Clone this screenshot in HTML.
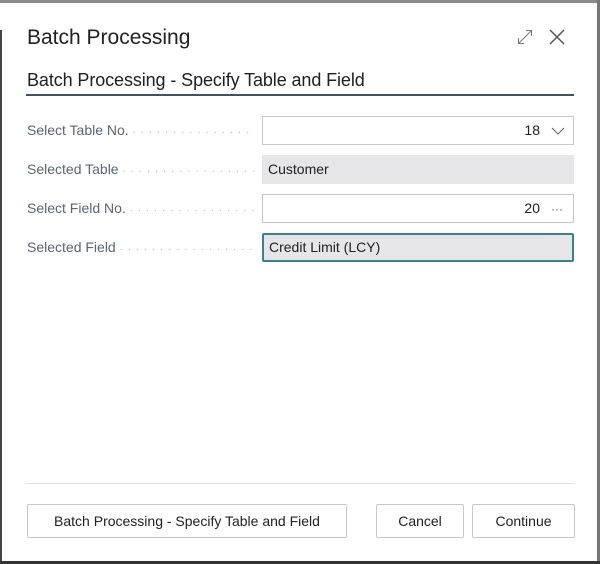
<!DOCTYPE html>
<html><head><style>
body{margin:0;width:600px;height:564px;background:#fff;position:relative;overflow:hidden;font-family:"Liberation Sans",sans-serif;}
.top{position:absolute;left:0;top:0;width:600px;height:3px;background:#8a8a8a}
.lb{position:absolute;left:0;top:30px;width:2px;height:534px;background:#444}
.rb{position:absolute;right:0;top:0;width:3px;height:564px;background:#777}
.bb{position:absolute;left:0;bottom:0;width:600px;height:3px;background:#333}
.t{position:absolute;left:27px;top:26px;font-size:21px;color:#212121}
.st{position:absolute;left:27px;top:70px;font-size:18px;color:#212121;letter-spacing:-0.1px}
.ul{position:absolute;left:26px;top:94px;width:548px;height:2px;background:#46505e}
.lab{position:absolute;left:27px;font-size:14px;color:#5b6573;width:228px;white-space:nowrap;overflow:hidden}
.lab:after{content:" · · · · · · · · · · · · · · · · · · · · · · · · ·";color:#aab;font-size:10px;letter-spacing:1px}
.f{position:absolute;left:262px;width:312px;height:29px;box-sizing:border-box;font-size:14px;color:#212121;line-height:27px}
.w{border:1px solid #c8c8cc;background:#fff}
.g{background:#e6e6e8}
.sep{position:absolute;left:26px;top:483px;width:548px;height:1px;background:#e1e1e1}
.b{position:absolute;top:504px;height:34px;box-sizing:border-box;border:1px solid #c8c8c8;border-radius:2px;background:#fff;font-size:14px;color:#212121;text-align:center;line-height:32px}
</style></head><body>
<div class="top"></div><div class="lb"></div><div class="rb"></div><div class="bb"></div>
<div class="t">Batch Processing</div>
<svg style="position:absolute;left:515px;top:27px" width="20" height="20" viewBox="0 0 20 20" fill="none" stroke="#777" stroke-width="1"><path d="M3.5 16.5L16.5 3.5M11 3.5h5.5v5.5M3.5 11v5.5H9"/></svg>
<svg style="position:absolute;left:547px;top:27px" width="20" height="20" viewBox="0 0 20 20" fill="none" stroke="#555" stroke-width="1.5"><path d="M3 3L17 17M17 3L3 17"/></svg>
<div class="st">Batch Processing - Specify Table and Field</div>
<div class="ul"></div>
<div class="lab" style="top:122px">Select Table No.</div>
<div class="lab" style="top:161px">Selected Table</div>
<div class="lab" style="top:200px">Select Field No.</div>
<div class="lab" style="top:239px">Selected Field</div>
<div class="f w" style="top:116px;text-align:right;padding-right:33px">18</div>
<svg style="position:absolute;left:550px;top:125px" width="16" height="12" viewBox="0 0 16 12" fill="none" stroke="#666" stroke-width="1.1"><path d="M2 3l6 6 6-6"/></svg>
<div class="f g" style="top:155px;padding-left:6px;line-height:29px">Customer</div>
<div class="f w" style="top:194px;text-align:right;padding-right:33px">20</div>
<div style="position:absolute;left:551px;top:202px;font-size:12px;color:#555">···</div>
<div class="f g" style="top:233px;padding-left:5px;border:2px solid #3c8388;border-radius:2px;line-height:25px">Credit Limit (LCY)</div>
<div class="sep"></div>
<div class="b" style="left:27px;width:320px">Batch Processing - Specify Table and Field</div>
<div class="b" style="left:376px;width:88px">Cancel</div>
<div class="b" style="left:472px;width:103px">Continue</div>
</body></html>
